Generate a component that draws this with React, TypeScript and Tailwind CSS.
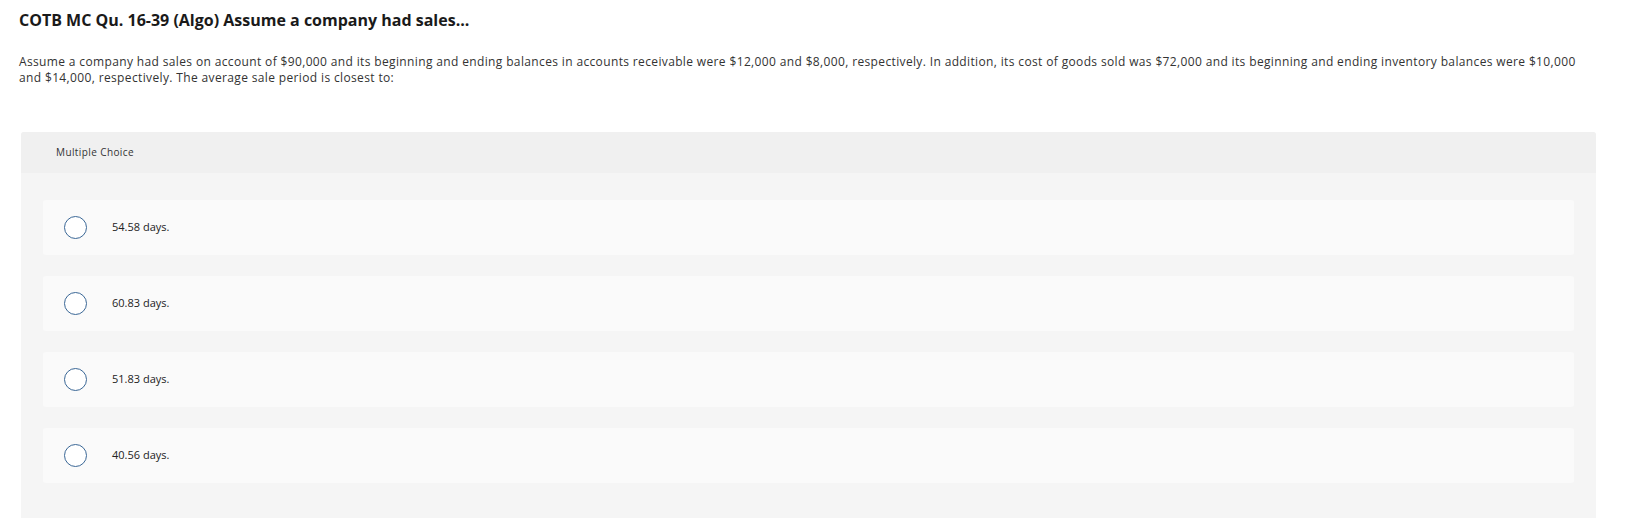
import React from 'react'

const options = ['54.58 days.', '60.83 days.', '51.83 days.', '40.56 days.']

const App = () => {
  return (
    <div className="min-h-screen bg-white px-[19px] pt-[8px] text-[#333]" style={{ fontFamily: '"Open Sans", Lato, sans-serif' }}>
      <h1 className="text-[16px] font-bold leading-[24px] text-[#1a1a1a]">
        COTB MC Qu. 16-39 (Algo) Assume a company had sales...
      </h1>

      <p className="mt-[22px] w-[1565px] text-[12px] leading-[16px] tracking-[0.36px] text-[#333]">
        Assume a company had sales on account of $90,000 and its beginning and ending balances in accounts receivable were
        $12,000 and $8,000, respectively. In addition, its cost of goods sold was $72,000 and its beginning and ending inventory
        balances were $10,000 and $14,000, respectively. The average sale period is closest to:
      </p>

      <div className="mt-[46px] ml-[2px] w-[1575px] overflow-hidden rounded-t-[3px] bg-[#f5f5f5]">
        <div className="flex h-[41px] items-center bg-[#f0f0f0] pl-[35px] text-[10px] tracking-[0.4px] text-[#333]">
          Multiple Choice
        </div>

        <div className="flex flex-col gap-[21px] px-[22px] pt-[27px] pb-[40px]">
          {options.map((opt) => (
            <div key={opt} className="flex h-[55px] items-center rounded-[3px] bg-[#fafafa] pl-[21px]">
              <span className="h-[23px] w-[23px] shrink-0 rounded-full border-[1.5px] border-[#3a6796] bg-white" />
              <span className="ml-[25px] text-[11px] text-[#222]">{opt}</span>
            </div>
          ))}
        </div>
      </div>
    </div>
  )
}

export default App
